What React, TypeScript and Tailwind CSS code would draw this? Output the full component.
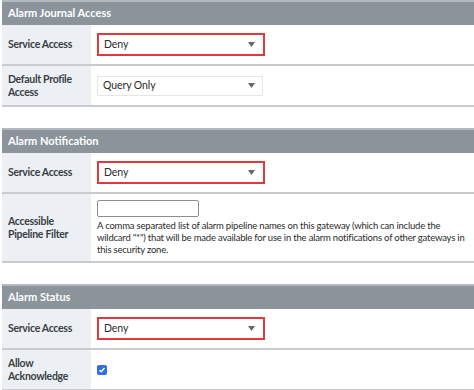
import React from "react";

const font = { fontFamily: '"Lato", "Open Sans", sans-serif' };

const Select = ({ value, highlight }: { value: string; highlight?: boolean }) => (
  <div
    className={
      highlight
        ? "w-[168px] h-[23px] border-2 border-[#e2393f] bg-white flex items-center justify-between pl-[5px] pr-[8px]"
        : "w-[166px] h-[20px] border border-[#e4e6e9] bg-white flex items-center justify-between pl-[5px] pr-[7px]"
    }
  >
    <span className="text-[10.5px] tracking-[-0.1px] text-[#2b2b2b]">{value}</span>
    <svg width="7" height="5" viewBox="0 0 7 5">
      <path d="M0 0h7L3.5 5z" fill="#666" />
    </svg>
  </div>
);

const Row = ({ label, children, tall }: { label: React.ReactNode; children: React.ReactNode; tall?: string }) => (
  <div className={`flex border-b-2 border-[#c9cbce] ${tall ?? "h-[41px]"}`}>
    <div className="w-[89px] shrink-0 bg-[#eceff3] flex items-center pl-[6px] text-[10.5px] tracking-[-0.3px] font-bold leading-[13px] text-[#3a3f44]">
      {label}
    </div>
    <div className="flex-1 flex items-center pl-[6px]">{children}</div>
  </div>
);

const Header = ({ title }: { title: string }) => (
  <div className="h-[25px] border-t-2 border-[#b3b9be] bg-[#8b949b] flex items-center pl-[6px] text-[11px] font-bold text-white">
    {title}
  </div>
);

export default function App() {
  return (
    <div className="w-[474px] h-[390px] bg-white overflow-hidden pl-[2px]" style={font}>
      <div>
        <Header title="Alarm Journal Access" />
        <Row label="Service Access">
          <Select value="Deny" highlight />
        </Row>
        <Row label={<span>Default Profile<br />Access</span>}>
          <Select value="Query Only" />
        </Row>
      </div>

      <div className="mt-[21px]">
        <Header title="Alarm Notification" />
        <Row label="Service Access">
          <Select value="Deny" highlight />
        </Row>
        <Row label={<span>Accessible<br />Pipeline Filter</span>} tall="h-[69px]">
          <div className="flex flex-col">
            <div className="w-[102px] h-[17px] border border-[#8a8d91] rounded-[2px] bg-white" />
            <p className="text-[9.5px] tracking-[-0.2px] leading-[12px] text-[#2b2b2b] mt-[3px] pr-[6px]">
              A comma separated list of alarm pipeline names on this gateway (which can include the wildcard "*") that will be made available for use in the alarm notifications of other gateways in this security zone.
            </p>
          </div>
        </Row>
      </div>

      <div className="mt-[21px]">
        <Header title="Alarm Status" />
        <Row label="Service Access">
          <Select value="Deny" highlight />
        </Row>
        <Row label={<span>Allow<br />Acknowledge</span>}>
          <div className="w-[10px] h-[10px] rounded-[2px] bg-[#2f6fe4] flex items-center justify-center">
            <svg width="8" height="8" viewBox="0 0 8 8">
              <path d="M1.5 4.2 3.2 5.8 6.5 2" stroke="white" strokeWidth="1.4" fill="none" />
            </svg>
          </div>
        </Row>
      </div>
    </div>
  );
}
